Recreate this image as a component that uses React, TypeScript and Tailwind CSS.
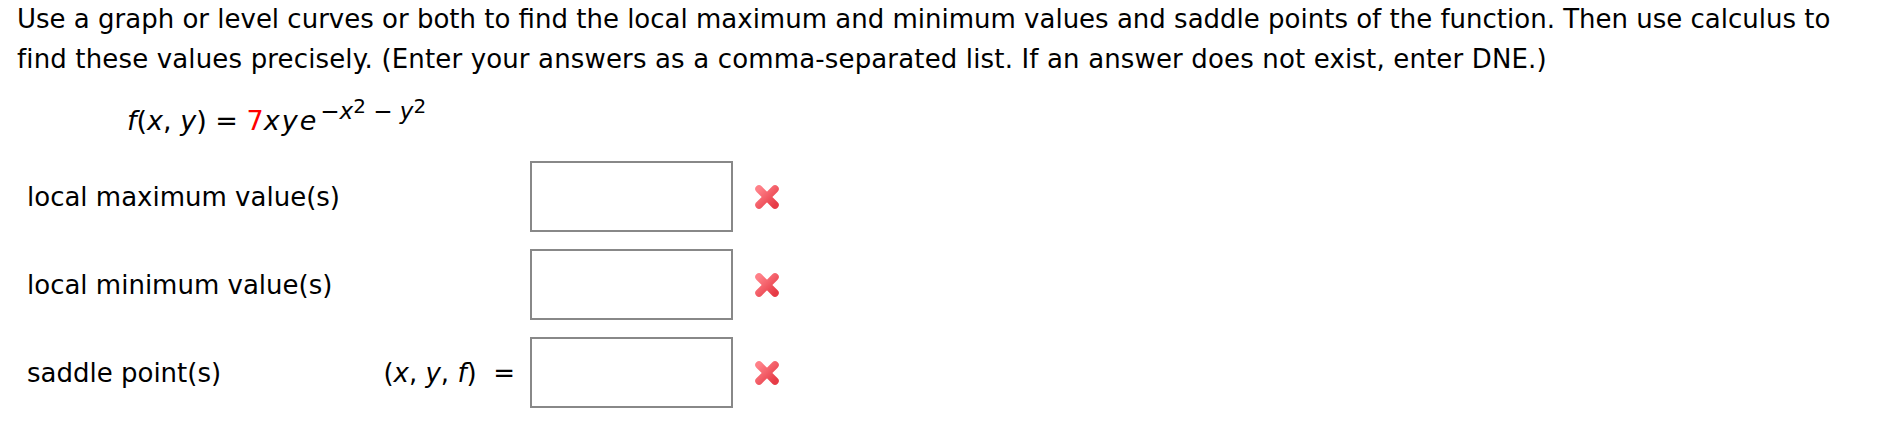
const rows = [
  { label: 'local maximum value(s)', point: false },
  { label: 'local minimum value(s)', point: false },
  { label: 'saddle point(s)', point: true },
]

function WrongMark() {
  return (
    <svg width="28" height="28" viewBox="0 0 28 28" className="shrink-0">
      <defs>
        <linearGradient id="xg" x1="0" y1="0" x2="1" y2="1">
          <stop offset="0" stopColor="#ff8088" />
          <stop offset="1" stopColor="#e63b46" />
        </linearGradient>
      </defs>
      <g stroke="url(#xg)" strokeWidth="7.5" strokeLinecap="round">
        <line x1="6" y1="6" x2="22" y2="22" />
        <line x1="22" y1="6" x2="6" y2="22" />
      </g>
    </svg>
  )
}

export default function App() {
  return (
    <div className="min-h-screen bg-white text-black font-['DejaVu_Sans','Verdana',sans-serif] text-[26px] leading-[40px]">
      {/* Question text */}
      <div className="pl-[17px] -mt-[1px]">
        <div className="whitespace-nowrap">
          Use a graph or level curves or both to find the local maximum and minimum values and saddle points of the function. Then use calculus to
        </div>
        <div className="whitespace-nowrap tracking-[0.15px]">
          find these values precisely. (Enter your answers as a comma-separated list. If an answer does not exist, enter DNE.)
        </div>
      </div>

      {/* Function */}
      <div className="mt-[22px] pl-[127px] whitespace-nowrap text-[27px]">
        <i>f</i>(<i>x</i>, <i>y</i>) = <span className="text-[#ff0000]">7</span>
        <i className="tracking-[2px]">xye</i>
        <span className="relative -top-[11px] text-[23px] pl-[2px]">
          −<i>x</i>
          <span className="relative -top-[6px] text-[20px]">2</span> − <i>y</i>
          <span className="relative -top-[6px] text-[20px]">2</span>
        </span>
      </div>

      {/* Answer rows */}
      <div className="mt-[18px] pl-[27px] flex flex-col gap-[17px]">
        {rows.map((row) => (
          <div key={row.label} className="flex items-center h-[71px]">
            <div className="w-[355px]">{row.label}</div>
            <div className="w-[148px] pr-[15px] flex justify-end whitespace-nowrap">
              {row.point && (
                <span>
                  (<i>x</i>, <i>y</i>, <i>f</i>)&nbsp; =
                </span>
              )}
            </div>
            <div className="w-[203px] h-[71px] border-2 border-[#888888] bg-white" />
            <div className="ml-[20px]">
              <WrongMark />
            </div>
          </div>
        ))}
      </div>
    </div>
  )
}
